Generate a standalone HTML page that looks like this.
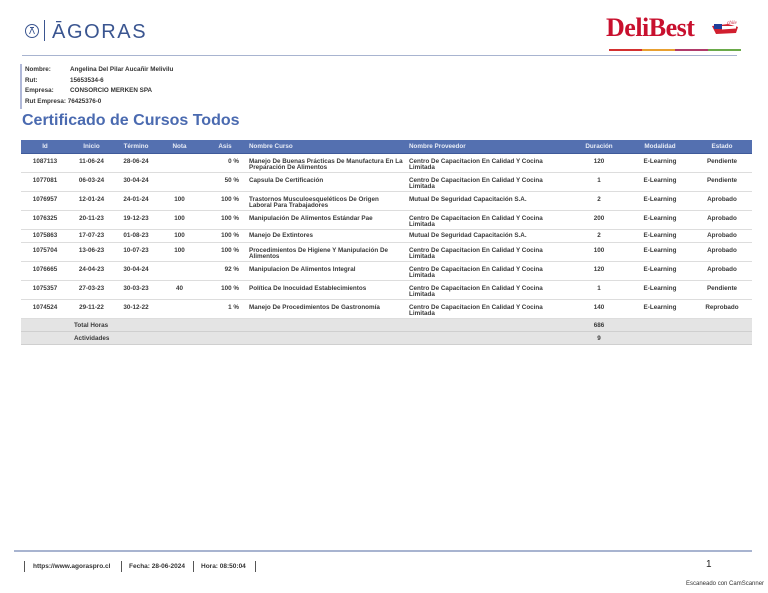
<!DOCTYPE html>
<html><head><meta charset="utf-8"><style>
*{margin:0;padding:0;box-sizing:border-box}
body{width:768px;height:593px;background:#fff;position:relative;overflow:hidden;font-family:"Liberation Sans",Arial,sans-serif;color:#333}
.abs{position:absolute}
table{position:absolute;left:21px;top:140px;width:731px;border-collapse:collapse;font-size:6.3px;font-weight:bold;color:#3a3a3a;table-layout:fixed}
th{background:#5470b0;color:#e8ecf6;height:13px;font-weight:bold;text-align:center;border-bottom:1px solid #3f5a9a}
th.l{text-align:left}
td{vertical-align:top;padding-top:5px;border-bottom:1px solid #ddd;line-height:6.5px;padding-right:6px}
td.c{text-align:center;padding-right:0}td.r{text-align:right;padding-right:10px}
tr.g td{background:#e4e4e4;padding-top:4px;border-bottom:1px solid #cfcfcf}
.info{font-size:6.3px;font-weight:bold;color:#333;line-height:10.7px}
</style></head><body>
<svg class="abs" style="left:24px;top:22px" width="16" height="18" viewBox="0 0 16 18"><circle cx="8" cy="9" r="6.5" fill="none" stroke="#3a5590" stroke-width="1"/><path d="M5.5 12 L8 6 L10.5 12 M6 5.5 H10" fill="none" stroke="#3a5590" stroke-width="0.9"/></svg>
<div class="abs" style="left:44px;top:20px;width:1px;height:21px;background:#3a5590"></div>
<div class="abs" style="left:52px;top:21px;font-size:20px;letter-spacing:1.6px;color:#3a5590;font-weight:normal;line-height:22px">ĀGORAS</div>
<div class="abs" style="left:606px;top:13px;font-family:'Liberation Serif',serif;font-weight:bold;font-size:26px;color:#c8102e;line-height:30px;letter-spacing:-0.5px">DeliBest</div>
<svg class="abs" style="left:710px;top:19px" width="30" height="18" viewBox="0 0 30 18"><path d="M2 7 L18 5 L28 8 L26 14 L6 15 Z" fill="#d11f2f"/><rect x="4" y="5" width="8" height="5" fill="#1f3f9a"/><path d="M12 7 L26 7 L26 9.5 L12 10.5Z" fill="#fff"/><text x="17" y="5" font-size="5" fill="#c8102e" font-style="italic" font-family="Liberation Serif">chile</text></svg>
<div class="abs" style="left:609px;top:49px;height:2px;width:33px;background:#d32f2f"></div>
<div class="abs" style="left:642px;top:49px;height:2px;width:33px;background:#e8a030"></div>
<div class="abs" style="left:675px;top:49px;height:2px;width:33px;background:#b03a6a"></div>
<div class="abs" style="left:708px;top:49px;height:2px;width:33px;background:#6aaa4a"></div>
<div class="abs" style="left:22px;top:55px;width:715px;height:1px;background:#a8b4d0"></div>
<div class="abs" style="left:20px;top:64px;width:1.5px;height:45px;background:#b0b8d8"></div>
<div class="abs info" style="left:25px;top:65px">Nombre:<br>Rut:<br>Empresa:<br>Rut Empresa: 76425376-0</div>
<div class="abs info" style="left:70px;top:65px">Angelina Del Pilar Aucañir Melivilu<br>15653534-6<br>CONSORCIO MERKEN SPA</div>
<div class="abs" style="left:22px;top:112px;font-size:16px;font-weight:bold;color:#4a6ab0">Certificado de Cursos Todos</div>
<table>
<colgroup><col style="width:48px"><col style="width:45px"><col style="width:44px"><col style="width:43px"><col style="width:48px"><col style="width:160px"><col style="width:161px"><col style="width:58px"><col style="width:64px"><col style="width:60px"></colgroup>
<tr><th>Id</th><th>Inicio</th><th>Término</th><th>Nota</th><th>Asis</th><th class="l">Nombre Curso</th><th class="l">Nombre Proveedor</th><th>Duración</th><th>Modalidad</th><th>Estado</th></tr>
<tr style="height:19px"><td class="c">1087113</td><td class="c">11-06-24</td><td class="c">28-06-24</td><td></td><td class="r">0 %</td><td>Manejo De Buenas Prácticas De Manufactura En La Preparación De Alimentos</td><td>Centro De Capacitacion En Calidad Y Cocina Limitada</td><td class="c">120</td><td class="c">E-Learning</td><td class="c">Pendiente</td></tr>
<tr style="height:19px"><td class="c">1077081</td><td class="c">06-03-24</td><td class="c">30-04-24</td><td></td><td class="r">50 %</td><td>Capsula De Certificación</td><td>Centro De Capacitacion En Calidad Y Cocina Limitada</td><td class="c">1</td><td class="c">E-Learning</td><td class="c">Pendiente</td></tr>
<tr style="height:19px"><td class="c">1076957</td><td class="c">12-01-24</td><td class="c">24-01-24</td><td class="c">100</td><td class="r">100 %</td><td>Trastornos Musculoesqueléticos De Origen Laboral Para Trabajadores</td><td>Mutual De Seguridad Capacitación S.A.</td><td class="c">2</td><td class="c">E-Learning</td><td class="c">Aprobado</td></tr>
<tr style="height:19px"><td class="c">1076325</td><td class="c">20-11-23</td><td class="c">19-12-23</td><td class="c">100</td><td class="r">100 %</td><td>Manipulación De Alimentos Estándar Pae</td><td>Centro De Capacitacion En Calidad Y Cocina Limitada</td><td class="c">200</td><td class="c">E-Learning</td><td class="c">Aprobado</td></tr>
<tr style="height:13px"><td class="c" style="padding-top:3px">1075863</td><td class="c" style="padding-top:3px">17-07-23</td><td class="c" style="padding-top:3px">01-08-23</td><td class="c" style="padding-top:3px">100</td><td class="r" style="padding-top:3px">100 %</td><td style="padding-top:3px">Manejo De Extintores</td><td style="padding-top:3px">Mutual De Seguridad Capacitación S.A.</td><td class="c" style="padding-top:3px">2</td><td class="c" style="padding-top:3px">E-Learning</td><td class="c" style="padding-top:3px">Aprobado</td></tr>
<tr style="height:19px"><td class="c">1075704</td><td class="c">13-06-23</td><td class="c">10-07-23</td><td class="c">100</td><td class="r">100 %</td><td>Procedimientos De Higiene Y Manipulación De Alimentos</td><td>Centro De Capacitacion En Calidad Y Cocina Limitada</td><td class="c">100</td><td class="c">E-Learning</td><td class="c">Aprobado</td></tr>
<tr style="height:19px"><td class="c">1076665</td><td class="c">24-04-23</td><td class="c">30-04-24</td><td></td><td class="r">92 %</td><td>Manipulacion De Alimentos Integral</td><td>Centro De Capacitacion En Calidad Y Cocina Limitada</td><td class="c">120</td><td class="c">E-Learning</td><td class="c">Aprobado</td></tr>
<tr style="height:19px"><td class="c">1075357</td><td class="c">27-03-23</td><td class="c">30-03-23</td><td class="c">40</td><td class="r">100 %</td><td>Política De Inocuidad Establecimientos</td><td>Centro De Capacitacion En Calidad Y Cocina Limitada</td><td class="c">1</td><td class="c">E-Learning</td><td class="c">Pendiente</td></tr>
<tr style="height:19px"><td class="c">1074524</td><td class="c">29-11-22</td><td class="c">30-12-22</td><td></td><td class="r">1 %</td><td>Manejo De Procedimientos De Gastronomía</td><td>Centro De Capacitacion En Calidad Y Cocina Limitada</td><td class="c">140</td><td class="c">E-Learning</td><td class="c">Reprobado</td></tr>
<tr class="g" style="height:13px"><td></td><td colspan="6" style="padding-left:5px">Total Horas</td><td class="c">686</td><td></td><td></td></tr>
<tr class="g" style="height:13px"><td></td><td colspan="6" style="padding-left:5px">Actividades</td><td class="c">9</td><td></td><td></td></tr>
</table>
<div class="abs" style="left:14px;top:550px;width:738px;height:1.5px;background:#a8b4d0"></div>
<div class="abs" style="left:24px;top:561px;height:11px;border-left:1px solid #555"></div>
<div class="abs" style="left:33px;top:563px;font-size:6.5px;font-weight:bold;color:#333">https://www.agoraspro.cl</div>
<div class="abs" style="left:121px;top:561px;height:11px;border-left:1px solid #555"></div>
<div class="abs" style="left:129px;top:563px;font-size:6.5px;font-weight:bold;color:#333">Fecha: 28-06-2024</div>
<div class="abs" style="left:193px;top:561px;height:11px;border-left:1px solid #555"></div>
<div class="abs" style="left:201px;top:563px;font-size:6.5px;font-weight:bold;color:#333">Hora: 08:50:04</div>
<div class="abs" style="left:255px;top:561px;height:11px;border-left:1px solid #555"></div>
<div class="abs" style="left:706px;top:559px;font-size:10px;color:#222">1</div>
<div class="abs" style="left:686px;top:581px;font-size:6px;color:#333">Escaneado con CamScanner</div>
</body></html>
